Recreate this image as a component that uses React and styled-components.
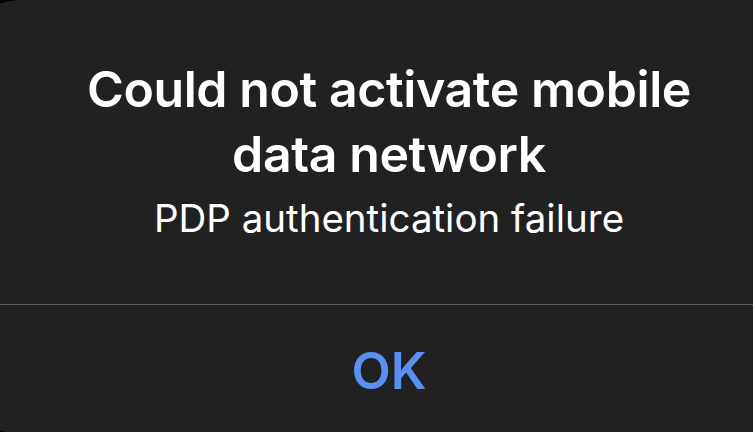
import React from "react";
import styled, { createGlobalStyle } from "styled-components";

const GlobalStyle = createGlobalStyle`
  html, body {
    margin: 0;
    padding: 0;
    background: #000;
    overflow: hidden;
  }
  #root {
    width: 753px;
    height: 432px;
    overflow: hidden;
  }
`;

const AlertCard = styled.div`
  width: 880px;
  height: 434px;
  margin-left: -51px;
  background-color: #212121;
  border-top-left-radius: 73px;
  border-bottom-left-radius: 73px;
  display: flex;
  flex-direction: column;
  font-family: "Inter", "Liberation Sans", sans-serif;
  color: #fff;
`;

const AlertBody = styled.div`
  padding: 57px 40px 0;
  height: 305px;
  box-sizing: border-box;
  text-align: center;
  border-bottom: 1.5px solid #5c5c5c;
`;

const AlertTitle = styled.h1`
  margin: 0;
  font-size: 50px;
  line-height: 65px;
  font-weight: 600;
  letter-spacing: -0.4px;
`;

const AlertMessage = styled.p`
  margin: 6px 0 0;
  font-size: 38.5px;
  line-height: 50px;
  font-weight: 400;
`;

const ActionButton = styled.button`
  flex: 1;
  border: none;
  background: transparent;
  color: #5b8ff2;
  font-family: inherit;
  font-size: 51px;
  font-weight: 600;
  padding: 2px 0 0;
  cursor: pointer;
`;

export default function App() {
  return (
    <>
      <GlobalStyle />
      <AlertCard>
        <AlertBody>
          <AlertTitle>
            Could not activate mobile
            <br />
            data network
          </AlertTitle>
          <AlertMessage>PDP authentication failure</AlertMessage>
        </AlertBody>
        <ActionButton>OK</ActionButton>
      </AlertCard>
    </>
  );
}
